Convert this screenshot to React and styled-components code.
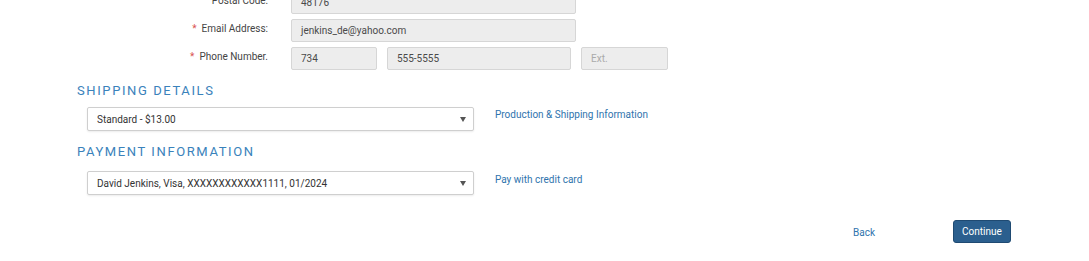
import React from "react";
import styled, { createGlobalStyle } from "styled-components";

const Global = createGlobalStyle`
  html, body { margin: 0; padding: 0; background: #fff; }
  body { font-family: Roboto, "Liberation Sans", Arial, sans-serif; overflow: hidden; }
`;

const Page = styled.div`
  width: 1089px;
  height: 261px;
  overflow: hidden;
  display: flex;
  flex-direction: column;
`;

const Fields = styled.div`
  margin-top: -9px;
  display: flex;
  flex-direction: column;
  gap: 5px;
`;

const FieldRow = styled.div`
  display: grid;
  grid-template-columns: 268px 1fr;
  column-gap: 23px;
  align-items: center;
`;

const Label = styled.label`
  text-align: right;
  font-size: 10px;
  color: #444;
  padding-bottom: 5px;
`;

const Req = styled.span`
  color: #d9534f;
  margin-right: 5px;
`;

const Inputs = styled.div`
  display: flex;
  gap: 10px;
`;

const Input = styled.div`
  box-sizing: border-box;
  width: ${(p) => p.$w}px;
  height: 23px;
  background: #ededed;
  border: 1px solid #d6d6d6;
  border-radius: 2px;
  font-size: 10px;
  color: ${(p) => (p.$placeholder ? "#aaa" : "#4a4a4a")};
  padding: 0 9px;
  display: flex;
  align-items: center;
`;

const Section = styled.section`
  padding-left: 77px;
  margin-top: 13px;
  display: flex;
  flex-direction: column;
`;

const Heading = styled.h2`
  margin: 0;
  font-size: 13px;
  font-weight: 400;
  letter-spacing: 1.6px;
  color: #3a82bb;
  line-height: 16px;
`;

const SelectRow = styled.div`
  display: flex;
  align-items: flex-start;
  gap: 21px;
  padding-left: 10px;
  margin-top: ${(p) => p.$mt}px;
`;

const Select = styled.div`
  box-sizing: border-box;
  width: 387px;
  height: 24px;
  background: #fff;
  border: 1px solid #cfcfcf;
  border-radius: 2px;
  box-shadow: 0 1px 2px rgba(0, 0, 0, 0.08);
  display: flex;
  align-items: center;
  justify-content: space-between;
  padding: 0 6px 0 9px;
  font-size: 10px;
  color: #333;
`;

const Arrow = styled.span`
  width: 0;
  height: 0;
  border-left: 3px solid transparent;
  border-right: 3px solid transparent;
  border-top: 5px solid #555;
  margin-right: 1px;
`;

const Link = styled.a`
  font-size: 10px;
  color: #2f74ad;
  text-decoration: none;
  margin-top: ${(p) => p.$mt}px;
`;

const Actions = styled.div`
  display: flex;
  align-items: center;
  justify-content: flex-end;
  gap: 78px;
  padding-right: 78px;
  margin-top: 25px;
`;

const BackLink = styled.a`
  font-size: 10px;
  color: #2f74ad;
  text-decoration: none;
  padding-top: 1px;
`;

const Button = styled.button`
  box-sizing: border-box;
  width: 58px;
  height: 23px;
  background: #2b5f8e;
  border: 1px solid #1f4a72;
  border-radius: 3px;
  color: #fff;
  font-family: inherit;
  font-size: 10px;
  padding: 0;
`;

export default function App() {
  return (
    <Page>
      <Global />
      <Fields>
        <FieldRow>
          <Label>Postal Code:</Label>
          <Inputs>
            <Input $w={285}>48176</Input>
          </Inputs>
        </FieldRow>
        <FieldRow>
          <Label>
            <Req>*</Req>Email Address:
          </Label>
          <Inputs>
            <Input $w={285}>jenkins_de@yahoo.com</Input>
          </Inputs>
        </FieldRow>
        <FieldRow>
          <Label>
            <Req>*</Req>Phone Number.
          </Label>
          <Inputs>
            <Input $w={86}>734</Input>
            <Input $w={184}>555-5555</Input>
            <Input $w={87} $placeholder>
              Ext.
            </Input>
          </Inputs>
        </FieldRow>
      </Fields>

      <Section>
        <Heading>SHIPPING DETAILS</Heading>
        <SelectRow $mt={8}>
          <Select>
            Standard - $13.00
            <Arrow />
          </Select>
          <Link $mt={2}>Production &amp; Shipping Information</Link>
        </SelectRow>
      </Section>

      <Section>
        <Heading>PAYMENT INFORMATION</Heading>
        <SelectRow $mt={11}>
          <Select>
            David Jenkins, Visa, XXXXXXXXXXXX1111, 01/2024
            <Arrow />
          </Select>
          <Link $mt={3}>Pay with credit card</Link>
        </SelectRow>
      </Section>

      <Actions>
        <BackLink>Back</BackLink>
        <Button>Continue</Button>
      </Actions>
    </Page>
  );
}
